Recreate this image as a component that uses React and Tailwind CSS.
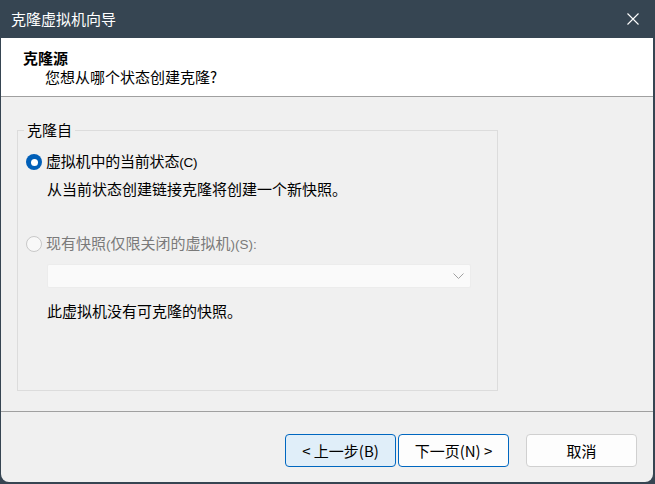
import React from "react";

const L = ({ children }) => (
  <span className="font-['Liberation_Sans',sans-serif] text-[13.5px]">{children}</span>
);

export default function App() {
  return (
    <div className="w-[655px] h-[484px] bg-[#364552] flex flex-col font-['Noto_Sans_CJK_SC','Noto_Sans',sans-serif] text-[15px] text-[#1a1a1a]">
      {/* title bar */}
      <div className="h-[38px] flex items-center justify-between pl-[11px] pr-[16px] shrink-0">
        <span className="text-white text-[15px] leading-[20px]">克隆虚拟机向导</span>
        <svg width="12" height="12" viewBox="0 0 12 12" className="block">
          <path d="M0.5 0.5 L11.5 11.5 M11.5 0.5 L0.5 11.5" stroke="#ffffff" strokeWidth="1.1" fill="none" />
        </svg>
      </div>

      <div className="flex-1 ml-px mr-[2px] mb-[2px] rounded-b-[8px] overflow-hidden bg-[#f0f0f0] flex flex-col">
        {/* header */}
        <div className="h-[59px] bg-white border-b border-[#a0a0a0] pt-[10px] shrink-0">
          <div className="pl-[22px] font-bold leading-[19px] text-black">克隆源</div>
          <div className="pl-[44px] leading-[20px] text-black">您想从哪个状态创建克隆?</div>
        </div>

        {/* content */}
        <div className="flex-1 pt-[33px] pl-[16px]">
          <div className="relative w-[481px] h-[261px] border border-[#dcdcdc] flex flex-col pt-[21px] pl-[8px]">
            <span className="absolute top-[-11px] left-[6px] px-[3px] bg-[#f0f0f0] leading-[20px] text-black">克隆自</span>

            <div className="flex items-center h-[20px]">
              <span className="w-[16px] h-[16px] rounded-full bg-[#005fb8] flex items-center justify-center shrink-0">
                <span className="w-[7px] h-[7px] rounded-full bg-white" />
              </span>
              <span className="ml-[4px] leading-[20px] text-black tracking-[-0.2px]">
                虚拟机中的当前状态<L>(C)</L>
              </span>
            </div>

            <div className="mt-[7px] pl-[21px] leading-[20px] text-black">从当前状态创建链接克隆将创建一个新快照。</div>

            <div className="mt-[35px] flex items-center h-[20px]">
              <span className="w-[16px] h-[16px] rounded-full border border-[#c8c8c8] bg-[#f8f8f8] shrink-0" />
              <span className="ml-[4px] leading-[20px] text-[#7a7a7a]">
                现有快照<L>(</L>仅限关闭的虚拟机<L>)(S):</L>
              </span>
            </div>

            <div className="mt-[10px] ml-[21px] w-[424px] h-[24px] bg-[#fafafa] border border-[#ececec] rounded-[2px] flex items-center justify-end pr-[6px]">
              <svg width="11" height="6" viewBox="0 0 11 6" className="block">
                <path d="M0.5 0.5 L5.5 5.5 L10.5 0.5" stroke="#a0a0a0" strokeWidth="1" fill="none" />
              </svg>
            </div>

            <div className="mt-[13px] pl-[21px] leading-[20px] text-black">此虚拟机没有可克隆的快照。</div>
          </div>
        </div>

        {/* footer */}
        <div className="h-[71px] border-t border-[#a0a0a0] shrink-0 flex justify-end items-start pt-[22px] pr-[16px]">
          <button className="w-[111px] h-[33px] rounded-[4px] border border-[#0067c0] bg-[#e0eef9] text-black text-[15px] leading-[20px]">&lt; 上一步(B)</button>
          <button className="ml-[2px] w-[111px] h-[33px] rounded-[4px] border border-[#0067c0] bg-[#fdfdfd] text-black text-[15px] leading-[20px]">下一页(N) &gt;</button>
          <button className="ml-[17px] w-[111px] h-[33px] rounded-[4px] border border-[#d0d0d0] bg-[#fdfdfd] text-black text-[15px] leading-[20px]">取消</button>
        </div>
      </div>
    </div>
  );
}
